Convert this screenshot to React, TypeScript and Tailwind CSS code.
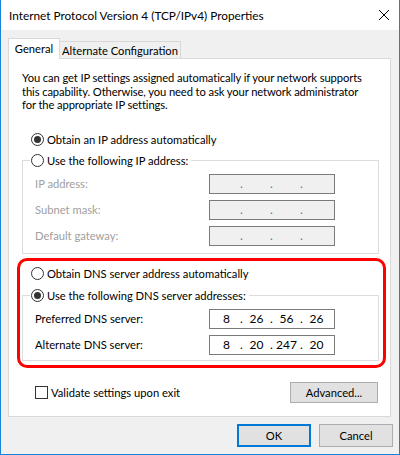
import React from "react";

function Radio({ checked }: { checked?: boolean }) {
  return (
    <span className="w-[13px] h-[13px] rounded-full border border-[#333333] bg-white flex items-center justify-center shrink-0">
      {checked && <span className="w-[7px] h-[7px] rounded-full bg-[#333333]" />}
    </span>
  );
}

function IPField({ values, disabled }: { values?: string[]; disabled?: boolean }) {
  const v = values ?? ["", "", "", ""];
  return (
    <div
      className={`w-[126px] h-[20px] border border-[#7a7a7a] flex items-center pl-[3px] text-[12px] ${
        disabled ? "bg-[#f0f0f0]" : "bg-white"
      }`}
    >
      {v.map((x, i) => (
        <React.Fragment key={i}>
          <span className="w-[27px] text-center leading-[18px]">{x}</span>
          {i < 3 && (
            <span
              className={`w-[3px] flex justify-center leading-[18px] ${
                disabled ? "text-[#6b6b9a]" : "text-black"
              }`}
            >
              .
            </span>
          )}
        </React.Fragment>
      ))}
    </div>
  );
}

function Row({
  label,
  values,
  disabled,
}: {
  label: string;
  values?: string[];
  disabled?: boolean;
}) {
  return (
    <div className="flex items-center h-[20px]">
      <span className={`w-[186px] pl-[12px] whitespace-nowrap ${disabled ? "text-[#a0a0a0]" : "text-black"}`}>{label}</span>
      <IPField values={values} disabled={disabled} />
    </div>
  );
}

export default function App() {
  return (
    <div className="w-[400px] h-[455px] overflow-hidden bg-[#f0f0f0] border-x border-b border-[#1883d7] flex flex-col text-[11.2px] text-black font-['Lato',sans-serif] leading-[13px] whitespace-nowrap">
      {/* Title bar */}
      <div className="h-[30px] shrink-0 bg-white flex items-center justify-between pl-[8px] pr-[10px]">
        <span className="text-[11.8px]">Internet Protocol Version 4 (TCP/IPv4) Properties</span>
        <svg width="10" height="10" viewBox="0 0 10 10">
          <path d="M0 0 L10 10 M10 0 L0 10" stroke="#000" strokeWidth="1" />
        </svg>
      </div>

      <div className="pl-[7px] pt-[8px] flex flex-col">
        {/* Tabs */}
        <div className="flex items-end h-[21px] -mb-px relative z-10">
          <div className="h-[21px] w-[52px] bg-white border border-b-0 border-[#d9d9d9] flex items-center justify-center pb-[1px]">
            General
          </div>
          <div className="h-[17px] w-[122px] -ml-px mb-px bg-[#f0f0f0] border border-b-0 border-[#d9d9d9] flex items-center justify-center">
            Alternate Configuration
          </div>
        </div>

        {/* Panel */}
        <div className="w-[383px] h-[359px] bg-white border border-[#d9d9d9] flex flex-col">
          <div className="pl-[13px] pt-[12px] leading-[13.5px] tracking-[-0.1px]">
            <div>You can get IP settings assigned automatically if your network supports</div>
            <div>this capability. Otherwise, you need to ask your network administrator</div>
            <div>for the appropriate IP settings.</div>
          </div>

          <div className="mt-[21px] pl-[22px] h-[13px] flex items-center gap-[3px]">
            <Radio checked />
            <span>Obtain an IP address automatically</span>
          </div>

          <div className="mt-[14px] ml-[13px] w-[357px] border border-[#dcdcdc] pb-[7px]">
            <div className="-mt-[7px] ml-[7px] h-[13px] flex items-center gap-[3px] bg-white w-fit pr-[3px] pl-[1px]">
              <Radio />
              <span>Use the following IP address:</span>
            </div>
            <div className="mt-[7px] flex flex-col gap-[6px]">
              <Row label="IP address:" disabled />
              <Row label="Subnet mask:" disabled />
              <Row label="Default gateway:" disabled />
            </div>
          </div>

          <div className="mt-[4px] ml-[8px] w-[369px] h-[110px] border-[3px] border-[#ff0000] rounded-[10px] flex flex-col">
            <div className="mt-[6px] pl-[11px] h-[13px] flex items-center gap-[3px]">
              <Radio />
              <span>Obtain DNS server address automatically</span>
            </div>
            <div className="mt-[15px] ml-[2px] w-[357px] border border-[#dcdcdc] pb-[5px]">
              <div className="-mt-[7px] ml-[7px] h-[13px] flex items-center gap-[3px] bg-white w-fit pr-[3px] pl-[1px]">
                <Radio checked />
                <span>Use the following DNS server addresses:</span>
              </div>
              <div className="mt-[7px] flex flex-col gap-[6px]">
                <Row label="Preferred DNS server:" values={["8", "26", "56", "26"]} />
                <Row label="Alternate DNS server:" values={["8", "20", "247", "20"]} />
              </div>
            </div>
          </div>

          <div className="mt-[14px] flex items-center justify-between pl-[26px] pr-[12px] h-[21px]">
            <div className="flex items-center gap-[3px]">
              <span className="w-[13px] h-[13px] border border-[#333333] bg-white" />
              <span>Validate settings upon exit</span>
            </div>
            <div className="w-[88px] h-[21px] bg-[#e1e1e1] border border-[#adadad] flex items-center justify-center">
              Advanced...
            </div>
          </div>
        </div>

        {/* Bottom buttons */}
        <div className="mt-[7px] flex justify-end gap-[8px] pr-[6px]">
          <div className="w-[74px] h-[23px] bg-[#e1e1e1] border-2 border-[#0078d7] flex items-center justify-center">
            OK
          </div>
          <div className="w-[74px] h-[23px] bg-[#e1e1e1] border border-[#adadad] flex items-center justify-center">
            Cancel
          </div>
        </div>
      </div>
    </div>
  );
}
